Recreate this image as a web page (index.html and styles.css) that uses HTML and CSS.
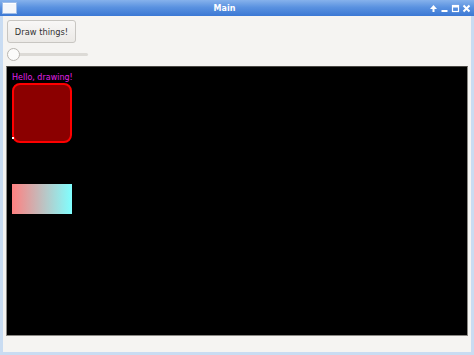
FILE: index.html
```html
<!DOCTYPE html>
<html>
<head>
<meta charset="utf-8">
<link rel="stylesheet" href="styles.css">
</head>
<body>
<div class="window">
  <div class="titlebar">
    <div class="winicon"></div>
    <div class="title">Main</div>
    <div class="controls">
      <svg width="9" height="9" viewBox="0 0 9 9"><path d="M4.5 1 L8 5 L5.5 5 L5.5 8 L3.5 8 L3.5 5 L1 5 Z" fill="#fff"/></svg>
      <svg width="9" height="9" viewBox="0 0 9 9"><rect x="1.5" y="6" width="6" height="2" fill="#fff"/></svg>
      <svg width="9" height="9" viewBox="0 0 9 9"><rect x="1.5" y="1.5" width="6" height="6" fill="none" stroke="#fff" stroke-width="1.2"/><rect x="1.5" y="1.5" width="6" height="2" fill="#fff"/></svg>
      <svg width="9" height="9" viewBox="0 0 9 9"><path d="M1.5 1.5 L7.5 7.5 M7.5 1.5 L1.5 7.5" stroke="#fff" stroke-width="2"/></svg>
    </div>
  </div>
  <div class="client">
    <div class="toolbar">
      <button class="btn">Draw things!</button>
    </div>
    <div class="sliderrow">
      <div class="slider">
        <div class="track"></div>
        <div class="knob"></div>
      </div>
    </div>
    <div class="canvas">
      <svg width="462" height="268" viewBox="0 0 462 268">
        <defs>
          <linearGradient id="g" x1="0" y1="0" x2="1" y2="0">
            <stop offset="0" stop-color="#ff8080"/>
            <stop offset="1" stop-color="#80ffff"/>
          </linearGradient>
        </defs>
        <text x="5" y="13" class="hello">Hello, drawing!</text>
        <rect x="6" y="17" width="58" height="58" rx="7" fill="#8b0000" stroke="#ff0000" stroke-width="2"/>
        <rect x="5" y="70" width="2" height="2" fill="#ffffff"/>
        <rect x="5" y="117" width="60" height="30" fill="url(#g)"/>
      </svg>
    </div>
  </div>
</div>
</body>
</html>
```
FILE: styles.css
```css
html, body {
  margin: 0;
  padding: 0;
  width: 474px;
  height: 355px;
  overflow: hidden;
}
body {
  font-family: "DejaVu Sans", sans-serif;
}
.window {
  width: 474px;
  height: 355px;
  display: flex;
  flex-direction: column;
  background: #c9dcf2;
  box-sizing: border-box;
}
.titlebar {
  height: 16px;
  flex: none;
  background: linear-gradient(to bottom, #86b2ec 0%, #5a92e0 45%, #3b78d4 100%);
  display: flex;
  align-items: center;
}
.winicon {
  width: 13px;
  height: 9px;
  margin-left: 3px;
  background: #f4f6fa;
  border-top: 1px solid #ffffff;
  box-shadow: 0 0 0 1px #9fbde8;
}
.title {
  flex: 1;
  text-align: center;
  color: #ffffff;
  font-weight: bold;
  font-size: 8px;
  padding-left: 4px;
}
.controls {
  display: flex;
  gap: 2px;
  margin-right: 3px;
}
.controls svg {
  display: block;
}
.client {
  flex: 1;
  margin: 0 3px 3px 3px;
  background: #f5f4f2;
  display: flex;
  flex-direction: column;
  padding: 4px 3px 16px 3px;
}
.toolbar {
  display: flex;
  padding-left: 1px;
}
.btn {
  font-family: "DejaVu Sans", sans-serif;
  font-size: 8.3px;
  color: #333333;
  height: 23px;
  width: 69px;
  padding: 0;
  border: 1px solid #c8c6c2;
  border-radius: 3px;
  background: linear-gradient(to bottom, #f8f7f6, #ebe9e6);
  margin: 0;
}
.sliderrow {
  height: 23px;
  display: flex;
  align-items: center;
}
.slider {
  position: relative;
  width: 81px;
  height: 13px;
  margin-left: 1px;
}
.track {
  position: absolute;
  left: 4px;
  right: 0;
  top: 5px;
  height: 3px;
  border-radius: 2px;
  background: #dcdad6;
}
.knob {
  position: absolute;
  left: 0;
  top: 0;
  width: 11px;
  height: 11px;
  border-radius: 50%;
  background: #fbfbfa;
  border: 1px solid #b8b5b0;
}
.canvas {
  flex: 1;
  background: #000000;
  border: 1px solid #8a8884;
  border-top-color: #4a4844;
  overflow: hidden;
}
.canvas svg {
  display: block;
}
.hello {
  font-family: "DejaVu Sans", sans-serif;
  font-size: 8px;
  fill: #e020e8;
}
```
